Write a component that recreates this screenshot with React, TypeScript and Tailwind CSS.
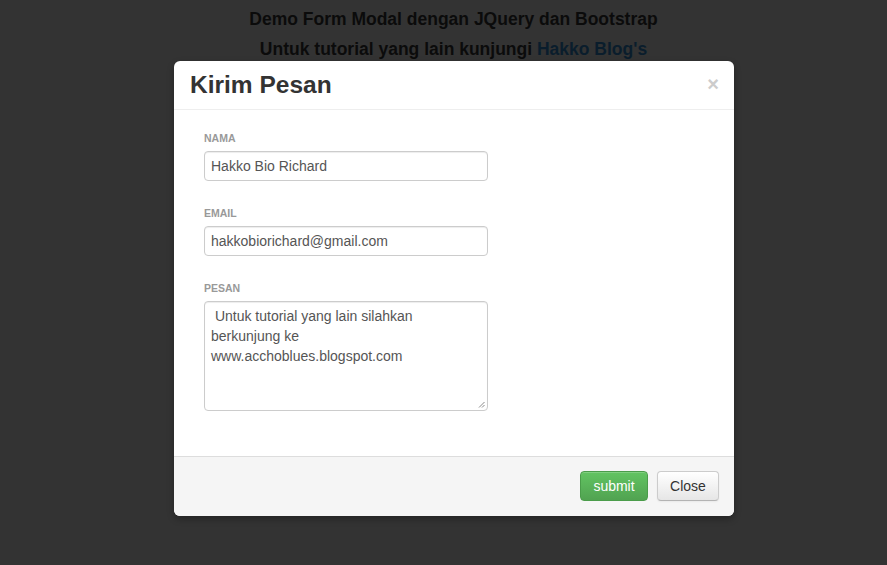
import React from "react";

export default function App() {
  return (
    <div
      className="relative h-[565px] w-[887px] overflow-hidden bg-[#333333] text-[#0b0b0b]"
      style={{ fontFamily: '"Liberation Sans", Arial, sans-serif' }}
    >
      <div className="pl-[20px] pt-[8px] text-center text-[17.5px] font-bold leading-[22px]">
        <div>Demo Form Modal dengan JQuery dan Bootstrap</div>
        <div className="mt-[8px]">
          Untuk tutorial yang lain kunjungi <span className="text-[#0a1d2c]">Hakko Blog's</span>
        </div>
      </div>

      <div className="absolute left-[174px] top-[61px] w-[560px] rounded-[6px] bg-white shadow-[0_3px_7px_rgba(0,0,0,0.3)]">
        <div className="flex h-[49px] items-center justify-between border-b border-[#eeeeee] pl-[16px] pr-[15px]">
          <h3 className="text-[24.5px] font-bold leading-[30px] text-[#333333]">Kirim Pesan</h3>
          <span className="mb-[2px] text-[20px] font-bold leading-[20px] text-[#cccccc]">×</span>
        </div>

        <div className="px-[30px] pb-[45px] pt-[18px]">
          <label className="mb-[3px] block text-[10.5px] font-bold uppercase leading-[20px] text-[#999999]">Nama</label>
          <div className="mb-[22px] flex h-[30px] w-[284px] items-center rounded-[4px] border border-[#cccccc] px-[6px] text-[14px] text-[#555555] shadow-[inset_0_1px_1px_rgba(0,0,0,0.075)]">
            Hakko Bio Richard
          </div>
          <label className="mb-[3px] block text-[10.5px] font-bold uppercase leading-[20px] text-[#999999]">Email</label>
          <div className="mb-[22px] flex h-[30px] w-[284px] items-center rounded-[4px] border border-[#cccccc] px-[6px] text-[14px] text-[#555555] shadow-[inset_0_1px_1px_rgba(0,0,0,0.075)]">
            hakkobiorichard@gmail.com
          </div>
          <label className="mb-[3px] block text-[10.5px] font-bold uppercase leading-[20px] text-[#999999]">Pesan</label>
          <div className="relative h-[110px] w-[284px] rounded-[4px] border border-[#cccccc] px-[6px] pt-[4px] text-[14px] leading-[20px] text-[#555555] shadow-[inset_0_1px_1px_rgba(0,0,0,0.075)]">
            <div className="whitespace-pre">{" Untuk tutorial yang lain silahkan"}</div>
            <div>berkunjung ke</div>
            <div>www.acchoblues.blogspot.com</div>
            <svg className="absolute bottom-[2px] right-[2px]" width="7" height="7" viewBox="0 0 7 7">
              <path d="M1 6.5 L6.5 1 M4 6.5 L6.5 4" stroke="#8a8a8a" strokeWidth="1" />
            </svg>
          </div>
        </div>

        <div className="flex justify-end gap-[9px] rounded-b-[6px] border-t border-[#dddddd] bg-[#f5f5f5] pb-[15px] pr-[15px] pt-[14px]">
          <button className="h-[30px] w-[68px] rounded-[4px] border border-[#4a9c4a] bg-[linear-gradient(#62c462,#51a351)] text-[14px] text-white shadow-[inset_0_1px_0_rgba(255,255,255,0.2)]">
            submit
          </button>
          <button className="h-[30px] w-[62px] rounded-[4px] border border-[#cccccc] border-b-[#b3b3b3] bg-[linear-gradient(#ffffff,#e6e6e6)] text-[14px] text-[#333333] shadow-[inset_0_1px_0_rgba(255,255,255,0.2),0_1px_2px_rgba(0,0,0,0.05)]">
            Close
          </button>
        </div>
      </div>
    </div>
  );
}
